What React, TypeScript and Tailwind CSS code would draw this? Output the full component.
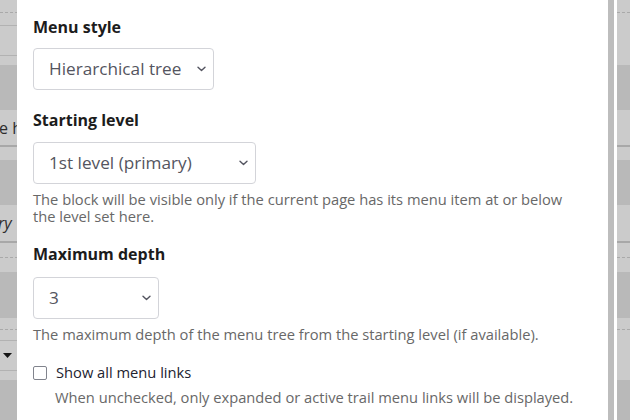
import React from "react";

const Chevron = () => (
  <svg width="9" height="6" viewBox="0 0 9 6" fill="none" className="shrink-0">
    <path d="M1 1.2 L4.5 4.6 L8 1.2" stroke="#545560" strokeWidth="1.4" strokeLinecap="round" strokeLinejoin="round" />
  </svg>
);

const Select = ({ value, w }: { value: string; w: string }) => (
  <div className={`${w} h-[42px] border border-[#d3d4d9] rounded-[4px] flex items-center justify-between pl-[15px] pr-[7px] bg-white`}>
    <span className="text-[17.2px] text-[#545560] leading-none">{value}</span>
    <Chevron />
  </div>
);

const Light = ({ h, children }: { h: string; children?: React.ReactNode }) => (
  <div className={`${h} bg-[#cbcbcb] flex items-center`}>{children}</div>
);
const Dark = ({ h }: { h: string }) => <div className={`${h} bg-[#b9b9b9]`} />;
const Dashed = ({ h }: { h: string }) => (
  <div className={`${h} bg-[#cbcbcb] flex items-center`}>
    <div className="w-full border-t border-dashed border-[#a9a9a9]" />
  </div>
);
const PartLine = () => (
  <div className="h-px bg-[#cbcbcb] flex">
    <div className="w-[17px] bg-[#b2b2b2]" />
  </div>
);
const Line = ({ h }: { h: string }) => <div className={`${h} bg-[#a8a8a8]`} />;

export default function App() {
  return (
    <div className="relative w-[630px] h-[420px] overflow-hidden" style={{ fontFamily: '"Open Sans", sans-serif' }}>
      {/* background page under overlay */}
      <div className="flex flex-col w-full">
        <Dashed h="h-[25px]" />
        <PartLine />
        <Light h="h-[29px]" />
        <PartLine />
        <Light h="h-[9px]" />
        <Dark h="h-[45px]" />
        <Light h="h-[35px]">
          <span className="ml-[-1px] text-[16px] text-[#2d2d2d] leading-none whitespace-nowrap">e h</span>
        </Light>
        <Line h="h-[2px]" />
        <Light h="h-[13px]" />
        <Dark h="h-[45px]" />
        <Light h="h-[36px]">
          <span className="ml-[-2px] text-[16px] italic text-[#2d2d2d] leading-none whitespace-nowrap">ry</span>
        </Light>
        <Line h="h-[2px]" />
        <Dashed h="h-[29px]" />
        <Dark h="h-[46px]" />
        <Dashed h="h-[22px]" />
        <PartLine />
        <Light h="h-[29px]">
          <svg width="9" height="5" viewBox="0 0 9 5" className="ml-[3px]">
            <path d="M0 0 H9 L4.5 5 Z" fill="#151515" />
          </svg>
        </Light>
        <PartLine />
        <Light h="h-[9px]" />
        <Dark h="h-[40px]" />
      </div>

      {/* modal */}
      <div className="absolute left-[17px] top-0 w-[600px] h-[420px] bg-white flex">
        <div className="flex-1 pl-4 pr-[25px] pt-[15px] flex flex-col">
          <div className="text-[16px] font-bold leading-6 text-[#1c1c1c]">Menu style</div>
          <div className="mt-[9px]">
            <Select value="Hierarchical tree" w="w-[181px]" />
          </div>

          <div className="mt-[18px] text-[16px] font-bold leading-6 text-[#1c1c1c]">Starting level</div>
          <div className="mt-[10px]">
            <Select value="1st level (primary)" w="w-[223px]" />
          </div>
          <div className="mt-[7px] text-[14.7px] leading-[17px] text-[#686868]">
            The block will be visible only if the current page has its menu item at or below the level set here.
          </div>

          <div className="mt-[17px] text-[16px] font-bold leading-6 text-[#1c1c1c]">Maximum depth</div>
          <div className="mt-[11px]">
            <Select value="3" w="w-[126px]" />
          </div>
          <div className="mt-[7px] text-[14.7px] leading-[17px] text-[#686868]">
            The maximum depth of the menu tree from the starting level (if available).
          </div>

          <div className="mt-[19px] flex items-center h-[20px]">
            <div className="w-[14px] h-[14px] border border-[#81848d] rounded-[2px] mt-[2px]" />
            <span className="ml-[9px] text-[14.7px] leading-5 text-[#222330]">Show all menu links</span>
          </div>
          <div className="mt-[7px] pl-[22px] text-[14.7px] leading-[17px] text-[#686868]">
            When unchecked, only expanded or active trail menu links will be displayed.
          </div>
        </div>
        <div className="w-[6px] h-full bg-[#bdbdbd]" />
        <div className="w-[3px]" />
      </div>
    </div>
  );
}
